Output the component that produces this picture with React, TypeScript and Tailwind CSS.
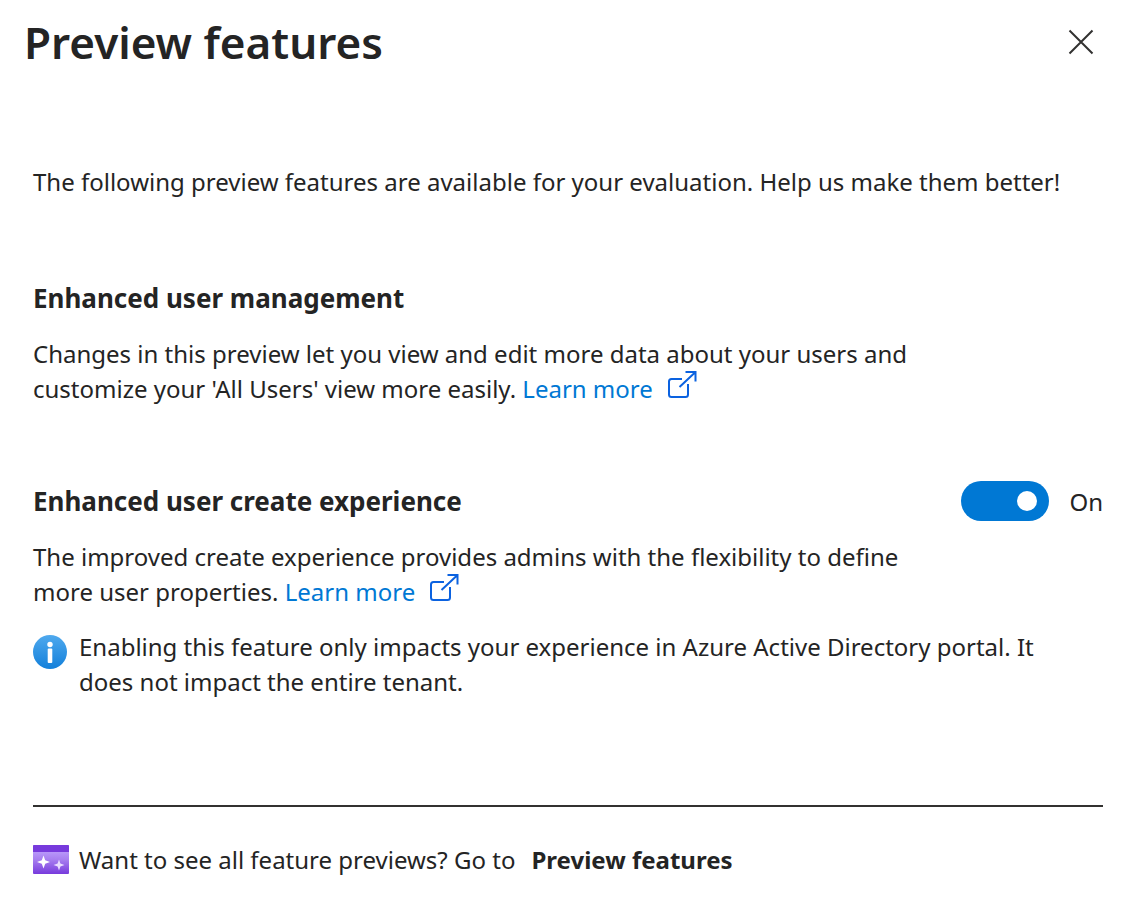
import React, { useState } from 'react';

function CloseIcon() {
  return (
    <svg width="26" height="26" viewBox="0 0 26 26" stroke="#323130" strokeWidth="2" aria-hidden="true">
      <path d="M1.5 1.5L24.5 24.5M24.5 1.5L1.5 24.5" />
    </svg>
  );
}

function ExternalLinkIcon() {
  return (
    <svg className="ml-3.5 inline align-baseline" width="30" height="27" viewBox="0 0 30 27" fill="none" stroke="#0b62e0" strokeWidth="2" aria-hidden="true">
      <path d="M15 8H4.5Q2 8 2 10.5V23.5Q2 26 4.5 26H18.5Q21 26 21 23.5V13" />
      <path d="M12.5 16L28 1.5M18.5 1H28.5V10.5" />
    </svg>
  );
}

function InfoIcon() {
  return (
    <svg className="mt-1.5 shrink-0" width="34" height="34" viewBox="0 0 34 34" aria-hidden="true">
      <defs>
        <linearGradient id="info-fill" x1="0" y1="0" x2="0" y2="1">
          <stop offset="0" stopColor="#4fa9ee" />
          <stop offset="1" stopColor="#1380da" />
        </linearGradient>
      </defs>
      <circle cx="17" cy="17" r="17" fill="url(#info-fill)" />
      <circle cx="17" cy="9.5" r="2.7" fill="#fff" />
      <rect x="14.700" y="13.500" width="4.600" height="14.500" rx="1" fill="#fff" />
    </svg>
  );
}

function PreviewIcon() {
  return (
    <svg className="shrink-0" width="36" height="29" viewBox="0 0 36 29" aria-hidden="true">
      <defs>
        <linearGradient id="preview-fill" x1="0" y1="0" x2="0" y2="1">
          <stop offset="0.25" stopColor="#b796f9" />
          <stop offset="0.5" stopColor="#a87ff0" />
          <stop offset="1" stopColor="#773adc" />
        </linearGradient>
      </defs>
      <rect width="36" height="29" rx="1" fill="url(#preview-fill)" />
      <path d="M1 0H35Q36 0 36 1V7H0V1Q0 0 1 0Z" fill="#773adc" />
      <path d="M10.5 10.5L12.2 15.300L17 17L12.2 18.700L10.5 23.5L8.800 18.700L4 17L8.800 15.300Z" fill="#fff" />
      <path d="M26 14.5L27.4 18.600L31.500 20L27.4 21.400L26 25.5L24.600 21.400L20.500 20L24.600 18.600Z" fill="#e9dcff" />
    </svg>
  );
}

function LearnMore({ topic }: { topic: string }) {
  return (
    <a href={`#${topic}`} className="text-[#0078d4]">
      Learn more
      <ExternalLinkIcon />
    </a>
  );
}

export default function App() {
  const [enabled, setEnabled] = useState(true);

  return (
    <main className="bg-white pt-3.5 font-['Noto_Sans',sans-serif] text-[24px] leading-[35px] text-[#242424]">
      <header className="flex h-14 items-center justify-between pr-12 pl-6">
        <h1 className="text-[44px] font-semibold">Preview features</h1>
        <button type="button" aria-label="Close">
          <CloseIcon />
        </button>
      </header>

      <div className="pt-[94px] pr-[39px] pl-[33px]">
        <p>The following preview features are available for your evaluation. Help us make them better!</p>

        <section className="mt-[79px]">
          <h2 className="flex h-10 items-center text-[26px] font-bold">Enhanced user management</h2>
          <p className="mt-[18px] max-w-[900px]">
            Changes in this preview let you view and edit more data about your users and customize your 'All Users' view
            more easily. <LearnMore topic="user-management" />
          </p>
        </section>

        <section className="mt-[75px]">
          <div className="flex h-10 items-center justify-between">
            <h2 className="text-[26px] font-bold">Enhanced user create experience</h2>
            <label className="flex items-center gap-5">
              <input
                type="checkbox"
                role="switch"
                aria-label="Enhanced user create experience"
                checked={enabled}
                onChange={(e) => setEnabled(e.target.checked)}
                className="flex h-10 w-[88px] appearance-none items-center rounded-full bg-[#8a8886] px-3 before:size-5 before:rounded-full before:bg-white checked:justify-end checked:bg-[#0078d4]"
              />
              <span>{enabled ? 'On' : 'Off'}</span>
            </label>
          </div>
          <p className="mt-[18px] max-w-[900px]">
            The improved create experience provides admins with the flexibility to define more user properties.{' '}
            <LearnMore topic="user-create" />
          </p>
          <div className="mt-5 flex gap-3">
            <InfoIcon />
            <p className="max-w-[1000px]">
              Enabling this feature only impacts your experience in Azure Active Directory portal. It does not impact
              the entire tenant.
            </p>
          </div>
        </section>

        <footer className="mt-[106px] flex items-center gap-2.5 border-t-2 border-[#323130] pt-[35px]">
          <PreviewIcon />
          <p>
            Want to see all feature previews? Go to
            <a href="#preview-features" className="ml-4 font-bold">
              Preview features
            </a>
          </p>
        </footer>
      </div>
    </main>
  );
}
